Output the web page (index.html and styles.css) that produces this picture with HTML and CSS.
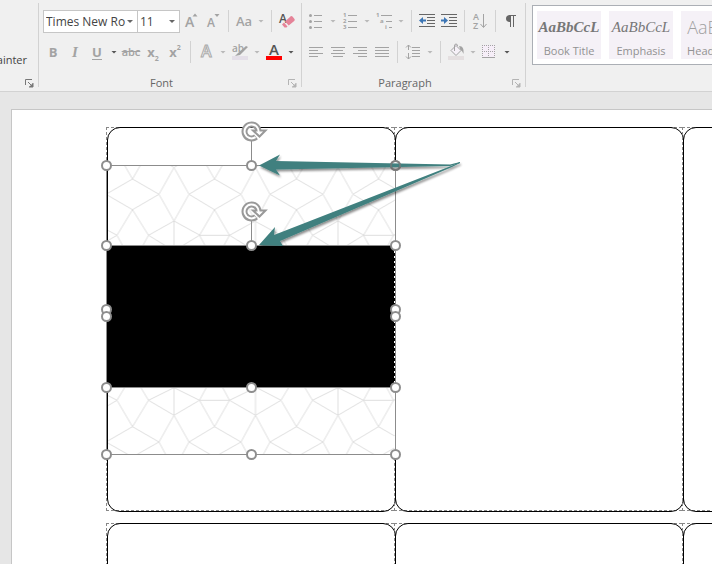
FILE: index.html
```html
<!DOCTYPE html>
<html lang="en">
<head>
<meta charset="utf-8">
<title>Label document</title>
<link rel="stylesheet" href="styles.css">
</head>
<body>
<header class="ribbon">
  <section class="group clipboard" aria-label="Clipboard">
    <button class="painter" type="button">Format Painter</button>
    <div class="caption"><span></span><button class="launcher dark" type="button" aria-label="Clipboard settings"><svg width="9" height="9" viewBox="0 0 9 9"><path d="M.5 6V.5H7M3 3l3 3M8 4v4H4"/><path class="solid" d="M8 4v4H4z"/></svg></button></div>
  </section>

  <section class="group" aria-label="Font">
    <div class="row">
      <span class="combo name"><select aria-label="Font name"><option>Times New Ro</option></select></span>
      <span class="combo size"><select aria-label="Font size"><option>11</option></select></span>
      <button class="tool" type="button" aria-label="Grow font"><svg width="16" height="18" viewBox="0 0 16 18"><text class="glyph" x="2" y="15" font-size="14">A</text><path class="solid" d="M9.500 4.500l2.500-3 2.500 3z"/></svg></button>
      <button class="tool" type="button" aria-label="Shrink font"><svg width="16" height="18" viewBox="0 0 16 18"><text class="glyph" x="2" y="15" font-size="12">A</text><path class="solid" d="M9.500 2l2.500 3 2.500-3z"/></svg></button>
      <i class="sep"></i>
      <button class="tool split case" type="button" aria-label="Change case"><span>Aa</span></button>
      <i class="sep"></i>
      <button class="tool" type="button" aria-label="Clear formatting"><svg width="16" height="18" viewBox="0 0 16 18"><text x="0" y="11" font-size="12" class="ink">A</text><g class="eraser"><path d="M11 5q1-1.500 2.500-.5l2 2.500q.8 1-.3 2l-5.500 4.500L6 9.500z"/><path d="M5 10.500l3.500 4L7.500 15.500H5.500L3 12.500z"/></g></svg></button>
    </div>
    <div class="row">
      <button class="tool letter bold" type="button">B</button>
      <button class="tool letter italic" type="button">I</button>
      <button class="tool letter split on under" type="button"><span>U</span></button>
      <button class="tool strike" type="button">abc</button>
      <button class="tool letter" type="button">x<sub>2</sub></button>
      <button class="tool letter" type="button">x<sup>2</sup></button>
      <i class="sep"></i>
      <button class="tool split" type="button" aria-label="Text effects"><svg width="16" height="18" viewBox="0 0 16 18"><text class="outlined" x="3" y="14" font-size="16">A</text></svg></button>
      <button class="tool split" type="button" aria-label="Highlight"><svg width="16" height="18" viewBox="0 0 16 18"><text class="glyph" x="0" y="9" font-size="10">ab</text><path class="solid" d="M14 3l2 1-8 8-5 1 3-3z"/><path class="bar" d="M0 13h16v4H0z" fill="#e4dfe8"/></svg></button>
      <button class="tool split on" type="button" aria-label="Font color"><svg width="16" height="18" viewBox="0 0 16 18"><text class="ink" x="3" y="12" font-size="15">A</text><path class="bar" d="M0 13h16v4H0z" fill="#f00"/></svg></button>
    </div>
    <div class="caption"><span>Font</span><button class="launcher" type="button" aria-label="Font settings"><svg width="9" height="9" viewBox="0 0 9 9"><path d="M.5 6V.5H7M3 3l3 3M8 4v4H4"/><path class="solid" d="M8 4v4H4z"/></svg></button></div>
  </section>

  <section class="group" aria-label="Paragraph">
    <div class="row">
      <button class="tool split" type="button" aria-label="Bullets"><svg width="16" height="16" viewBox="0 0 16 16"><path d="M6 2.500h8M6 8.500h8M6 14.500h8"/><g class="solid"><circle cx="2.500" cy="2.500" r="1.500"/><circle cx="2.500" cy="8.500" r="1.500"/><circle cx="2.500" cy="14.500" r="1.500"/></g></svg></button>
      <button class="tool split" type="button" aria-label="Numbering"><svg width="16" height="16" viewBox="0 0 16 16"><path d="M6 2.500h9M6 8.500h9M6 14.500h9"/><g class="tiny"><text x="1" y="4">1</text><text x="1" y="10">2</text><text x="1" y="16">3</text></g></svg></button>
      <button class="tool split" type="button" aria-label="Multilevel list"><svg width="16" height="16" viewBox="0 0 16 16"><path d="M5 2.500h11M10 8.500h6M13 14.500h3"/><g class="tiny"><text x="0" y="4">1</text><text x="4" y="10">a</text><text x="9" y="16">i</text></g></svg></button>
      <i class="sep"></i>
      <button class="tool on" type="button" aria-label="Decrease indent"><svg width="16" height="16" viewBox="0 0 16 16"><path d="M0 1.500h16M8 4.500h8M8 7.500h8M8 10.500h8M0 13.500h16"/><path class="blue" d="M0 7.500L4 4v2.500h3v2H4V11z"/></svg></button>
      <button class="tool on" type="button" aria-label="Increase indent"><svg width="16" height="16" viewBox="0 0 16 16"><path d="M0 1.500h16M8 4.500h8M8 7.500h8M8 10.500h8M0 13.500h16"/><path class="blue" d="M7 7.500L3 4v2.500H0v2h3V11z"/></svg></button>
      <i class="sep"></i>
      <button class="tool" type="button" aria-label="Sort"><svg width="16" height="18" viewBox="0 0 16 18"><text class="glyph" x="1" y="8" font-size="9">A</text><text class="glyph" x="1" y="17" font-size="9">Z</text><path d="M11.500 2v13M8.500 12l3 3.500 3-3.500"/></svg></button>
      <i class="sep"></i>
      <button class="tool on" type="button" aria-label="Show paragraph marks"><svg width="12" height="14" viewBox="0 0 12 14"><path class="solid" d="M11 1v1H9v11H8V2H6v11H5V8C2 8 1 6.500 1 4.500S2.500 1 5 1z"/></svg></button>
    </div>
    <div class="row">
      <button class="tool" type="button" aria-label="Align left"><svg width="14" height="12" viewBox="0 0 14 12"><path d="M0 1.500h14M0 4.500h9M0 7.500h14M0 10.500h9"/></svg></button>
      <button class="tool" type="button" aria-label="Center"><svg width="14" height="12" viewBox="0 0 14 12"><path d="M0 1.500h14M2 4.500h10M0 7.500h14M2 10.500h10"/></svg></button>
      <button class="tool" type="button" aria-label="Align right"><svg width="14" height="12" viewBox="0 0 14 12"><path d="M0 1.500h14M5 4.500h9M0 7.500h14M5 10.500h9"/></svg></button>
      <button class="tool" type="button" aria-label="Justify"><svg width="14" height="12" viewBox="0 0 14 12"><path d="M0 1.500h14M0 4.500h14M0 7.500h14M0 10.500h14"/></svg></button>
      <i class="sep"></i>
      <button class="tool split" type="button" aria-label="Line spacing"><svg width="16" height="16" viewBox="0 0 16 16"><path d="M7 3.500h8M7 6.500h8M7 9.500h8M7 12.500h8M3.500 1v5M1 3.500L3.500 1 6 3.500M3.500 9v6M1 12.500L3.500 15 6 12.500"/></svg></button>
      <i class="sep"></i>
      <button class="tool split" type="button" aria-label="Shading"><svg width="16" height="18" viewBox="0 0 16 18"><path d="M8 2.500l5 5-5 5-5-5zM6.500 8V3q0-2 1.500-2t1.500 2" fill="#f6f1f8"/><path class="solid" d="M11 3c4 0 5 3 4.500 8-1-2-1-3-3-4z"/><path class="bar" d="M0 13h16v4H0z" fill="#e4dfe0"/></svg></button>
      <button class="tool split caret-on" type="button" aria-label="Borders"><svg width="14" height="14" viewBox="0 0 14 14"><path d="M0 0h13v13H0z" fill="#f6eef8" stroke="none"/><path stroke-dasharray="1 1" d="M0 .5h13M0 6.500h13M.5 0v12M6.500 0v12M12.500 0v12"/><path d="M0 12.500h13"/></svg></button>
    </div>
    <div class="caption"><span>Paragraph</span><button class="launcher" type="button" aria-label="Paragraph settings"><svg width="9" height="9" viewBox="0 0 9 9"><path d="M.5 6V.5H7M3 3l3 3M8 4v4H4"/><path class="solid" d="M8 4v4H4z"/></svg></button></div>
  </section>

  <section class="styles" aria-label="Styles">
    <button class="style" type="button"><span class="sample book">AaBbCcL</span>Book Title</button>
    <button class="style" type="button"><span class="sample emphasis">AaBbCcL</span>Emphasis</button>
    <button class="style" type="button"><span class="sample heading">AaBbC</span>Heading 1</button>
  </section>
</header>

<main class="workspace">
  <article class="page">
    <div class="labels">
      <div class="label"></div><div class="label"></div><div class="label"></div>
      <div class="label"></div><div class="label"></div><div class="label"></div>
    </div>
    <svg class="drawing" width="400" height="360" viewBox="100 110 400 360" role="img" aria-label="Selected shapes with arrows pointing at their top handles">
      <defs>
        <pattern id="mesh" patternUnits="userSpaceOnUse" x="91.500" y="0" width="164" height="600">
          <g class="mesh">
            <path d="M33.500 166L41 179l7.500-13M41 179l26.500 15.300L41 209.700l-26.500-15.400zM82.500 167.500l15 26.800-15 26.700-15-26.700zM82.500 167.500l-5-3M82.500 167.500l5-3M41 209.700l-15.500 25.600M41 209.700l16 25.600M82.500 221v25M82.500 221L57 235.300M82.500 221l26 14.300M57 235.300l-6 11M57 235.300l18 11M25.500 235.300l6 11M25.500 235.300L7 246M25.500 235.300L0 221.500"/>
            <path d="M115.500 166l7.500 13 7.500-13M123 179l26.500 15.300-26.500 15.400-25.500-15.400zM164 167.500l-14.500 26.800L164 221M0 167.500l14.500 26.800L0 221M164 167.500l-5-3M0 167.500l5-3M123 209.700l-15 25.600h30zM164 221l-26 14.300M0 221v25M164 221v25M108 235.300l6 11M108 235.300l-18 11M138 235.300l-6 11M138 235.300l18 11"/>
            <path d="M33.500 387l-8 13.300L41 426.700 57 400.300l-8-13.300M41 426.700L67.500 442 41 457M41 426.700L14.500 442 41 457M25.500 400.300L0 387M25.500 400.300L0 415.300M82.500 387.700L57 400.300l25.500 15L108 400.300zM82.500 387v28.300L67.500 442l7 13M82.500 415.300l15 26.700-7 13M108 400.300h30M108 400.300l7-13M138 400.300l-7-13M108 400.300l15 26.400 15-26.400M138 400.300l26-12.600M138 400.300l26 15M123 426.700L97.500 442l25.500 15M123 426.700l26.500 15.300-26.500 15M164 387v28.300L149.500 442l7 13M0 387v28.300L14.500 442l-7 13"/>
          </g>
        </pattern>
        <filter id="shade" x="-10%" y="-20%" width="120%" height="150%"><feDropShadow dx="1" dy="2" stdDeviation="1" flood-opacity=".45"/></filter>
        <g id="rotate">
          <path d="M4.500 5.400A7 7 0 1 1 7-.5" class="ring-out"/>
          <path d="M1.500-1h12.500L8 5z" class="tip"/>
          <path d="M4 5.700A7 7 0 1 1 7 1" class="ring-in"/>
        </g>
      </defs>
      <path d="M108 166h287v79H108zM108 388h287v66H108z" fill="#fff"/>
      <path d="M108 166h287v79H108zM108 388h287v66H108z" fill="url(#mesh)"/>
      <path d="M107 246h288v141H107z"/>
      <path class="frame" d="M106.500 165.500h289v289h-289zM106.500 245.500h289v142h-289zM251.500 141v24M251.500 221v24"/>
      <path d="M107.500 171v68M107.500 393v56" stroke="#000" fill="none"/>
      <path d="M394.500 171v279" stroke="#fff" stroke-dasharray="2 3"/>
      <g class="handles">
        <circle cx="106.500" cy="165.500" r="4.500"/><circle cx="251.500" cy="165.500" r="4.500"/><circle cx="395.500" cy="165.500" r="4.500"/>
        <circle cx="106.500" cy="245.500" r="4.500"/><circle cx="395.500" cy="245.500" r="4.500"/>
        <circle cx="106.500" cy="309.500" r="4.500"/><circle cx="395.500" cy="309.500" r="4.500"/>
        <circle cx="106.500" cy="316.500" r="4.500"/><circle cx="395.500" cy="316.500" r="4.500"/>
        <circle cx="106.500" cy="387.500" r="4.500"/><circle cx="251.500" cy="387.500" r="4.500"/><circle cx="395.500" cy="387.500" r="4.500"/>
        <circle cx="106.500" cy="454.500" r="4.500"/><circle cx="251.500" cy="454.500" r="4.500"/><circle cx="395.500" cy="454.500" r="4.500"/>
      </g>
      <use href="#rotate" x="251.500" y="131.500"/>
      <use href="#rotate" x="251.500" y="211.500"/>
      <g class="arrows" filter="url(#shade)">
        <path d="M259 165.500l21-11-4 6.500 174 3.500 10-2.500v1l-10 3-174 3.500 4 6z"/>
        <path d="M259 245l16-18-1 8 177-69 9-4v1l-8 4-172 74 3 5z"/>
      </g>
      <g class="handles"><circle cx="251.500" cy="245.500" r="4.500"/><circle class="ghost" cx="395.500" cy="165.500" r="4.500"/></g>
    </svg>
  </article>
</main>
</body>
</html>
```
FILE: styles.css
```css
* { box-sizing: border-box; }

body {
  margin: 0;
  height: 100vh;
  display: flex;
  flex-direction: column;
  overflow: hidden;
  background: #e6e6e6;
  font: 11px/16px "Open Sans", "Noto Sans", sans-serif;
  color: #666;
}

button, select {
  margin: 0;
  padding: 0;
  border: 0;
  background: none;
  font: inherit;
  color: inherit;
}

/* Ribbon */
.ribbon {
  flex: none;
  display: flex;
  height: 92px;
  padding: 3px 0 4px;
  overflow: hidden;
  background: #f0f0f0;
  border-bottom: 1px solid #d2d2d2;
}

.group {
  flex: none;
  display: flex;
  flex-direction: column;
  gap: 9px;
  padding: 7px 3px 0 3px;
  border-right: 1px solid #d2d2d2;
}

.clipboard { width: 39px; padding-left: 0; }

.painter {
  align-self: flex-end;
  margin: 33px 8px 0 0;
  padding-top: 9px;
  white-space: nowrap;
  color: #444;
}

.row { display: flex; height: 22px; }

.sep {
  width: 1px;
  margin: 0 4px;
  background: #d2d2d2;
}

.caption {
  display: flex;
  align-items: center;
  height: 8px;
  margin: auto -1px 0 0;
  text-align: center;
}

.caption span { flex: 1; }

.launcher {
  display: flex;
  justify-content: flex-end;
  width: 18px;
  padding-right: 2px;
  color: #b4b4b4;
}

.launcher.dark { color: #777; }

svg { flex: none; fill: none; stroke: currentColor; overflow: visible; }
svg .solid { fill: currentColor; stroke: none; }
svg text { stroke: none; }
svg .glyph { fill: currentColor; font-weight: 600; }
svg .ink { fill: #555; font-weight: 600; }
svg .outlined { fill: #f6f6f6; stroke: #aaa; font-weight: 600; }
svg .tiny { fill: currentColor; font-size: 6px; line-height: 6px; font-weight: 700; }
svg .blue { fill: #3d76b5; stroke: none; }
svg .bar { stroke: none; }
svg .eraser { fill: #e58398; stroke: none; }

.combo {
  position: relative;
  height: 23px;
  border: 1px solid #c6c6c6;
  background: #fff;
  color: #444;
}

.combo.name { width: 95px; margin-left: 1px; }
.combo.size { width: 43px; margin-left: -1px; }

.combo select {
  width: 100%;
  height: 21px;
  padding-left: 2px;
  appearance: none;
  font-size: 12px;
}

.combo::after, .split::after {
  content: "";
  width: 6px;
  height: 3px;
  background: #b9b9b9;
  clip-path: polygon(0 0, 100% 0, 50% 100%);
}

.combo::after {
  position: absolute;
  top: 9px;
  right: 4px;
  background: #666;
}

.tool {
  display: flex;
  align-items: center;
  justify-content: center;
  width: 22px;
  height: 22px;
  color: #a3a3a3;
}

.tool.on { color: #666; }

.tool.split {
  width: 34px;
  justify-content: space-between;
  padding: 0 3px;
}

.tool.on::after, .tool.caret-on::after { background: #555; }

.case { font-size: 13px; font-weight: 600; }
.letter { font-size: 13px; font-weight: 700; }
.italic { font-family: "Liberation Serif", serif; font-style: italic; font-size: 15px; }
.tool.under { color: #a3a3a3; padding-left: 6px; }
.under span { line-height: 14px; border-bottom: 1px solid; }
.strike { font-weight: 600; text-decoration: line-through; }
.letter sub, .letter sup { font-size: 7px; line-height: 8px; }
.letter sub { align-self: flex-end; }
.letter sup { align-self: flex-start; padding-top: 3px; }

/* Style gallery */
.styles {
  flex: 1;
  display: flex;
  gap: 8px;
  height: 60px;
  margin: 2px -2px 0 6px;
  padding: 5px 4px;
  overflow: hidden;
  border: 1px solid #abafb5;
  background: #fff;
}

.style {
  flex: none;
  width: 64px;
  height: 48px;
  overflow: hidden;
  background: #f5f1f7;
  color: #929292;
  white-space: nowrap;
}

.sample {
  display: block;
  height: 32px;
  line-height: 32px;
  font-family: "Liberation Serif", serif;
  font-size: 15px;
  font-style: italic;
  color: #777;
}

.book { font-weight: 700; }
.heading {
  padding-left: 2px;
  font-family: "Open Sans", sans-serif;
  font-size: 18px;
  font-style: normal;
  font-weight: 300;
  color: #a0a0a0;
}

/* Document */
.workspace {
  flex: 1;
  min-height: 0;
  padding: 17px 0 0 11px;
}

.page {
  position: relative;
  height: 100%;
  padding: 17px 0 0 94px;
  overflow: hidden;
  border: solid #c6c6c6;
  border-width: 1px 0 0 1px;
  background: #fff;
}

.labels {
  display: grid;
  grid-template-columns: repeat(3, 288px);
  grid-auto-rows: 384px;
  row-gap: 12px;
}

.label {
  position: relative;
  border: 1px dashed #888;
  border-right: 0;
}

.label::after {
  content: "";
  position: absolute;
  inset: -1px -2px -2px 0;
  border: 1px solid #000;
  border-radius: 13px;
}

/* Shapes float over the label grid */
.drawing {
  position: absolute;
  left: 88px;
  top: 0;
  fill: #000;
  stroke: none;
}

.mesh { fill: none; stroke: #dedede; }
.frame { fill: none; stroke: #8c8c8c; }
.handles { fill: #fff; stroke: #8e8e8e; stroke-width: 2; }
.handles .ghost { fill: none; stroke: #777; stroke-opacity: .7; }
.ring-out { fill: none; stroke: #999; stroke-width: 6; }
.ring-in { fill: none; stroke: #fff; stroke-width: 2; }
.tip { fill: #fff; stroke: #999; stroke-width: 2; }
.arrows { fill: #40807f; }
```
